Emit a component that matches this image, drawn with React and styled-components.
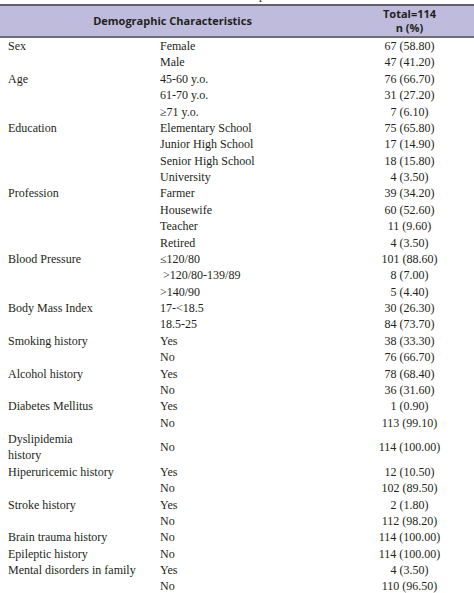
import React from "react";
import styled, { createGlobalStyle } from "styled-components";

const GlobalStyle = createGlobalStyle`
  html, body {
    margin: 0;
    padding: 0;
    background: #ffffff;
  }
`;

const Page = styled.div`
  width: 474px;
  height: 593px;
  overflow: hidden;
  background: #ffffff;
`;

const Caption = styled.div`
  height: 4px;
  overflow: hidden;
  display: flex;
  align-items: flex-end;
  justify-content: center;
  font-family: "Liberation Serif", serif;
  font-size: 12px;
  line-height: 12px;
  color: #231f20;
`;

const CaptionText = styled.span`
  display: block;
  transform: translateY(-3px);
`;

const Table = styled.table`
  width: 474px;
  border-collapse: collapse;
  table-layout: fixed;
  border-top: 2px solid #626168;
`;

const HeadRow = styled.tr`
  background: #bebbdc;
  border-bottom: 2px solid #6f6e74;
`;

const HeadCell = styled.th`
  height: 30px;
  padding: 0;
  font-family: "Open Sans", "Noto Sans", sans-serif;
  font-weight: 700;
  font-size: 11px;
  line-height: 14px;
  color: #231f20;
  text-align: center;
  vertical-align: middle;
`;

const Cell = styled.td`
  padding: 0 0 0 ${(p) => p.$pad || 0}px;
  font-family: "Liberation Serif", serif;
  font-size: 12px;
  line-height: 16.38px;
  color: #231f20;
  text-align: ${(p) => (p.$center ? "center" : "left")};
  vertical-align: middle;
  white-space: nowrap;
`;

const Row = styled.tr`
  height: ${(p) => (p.$tall ? "32.7px" : "auto")};
`;

const groups = [
  ["Sex", [["Female", "67 (58.80)"], ["Male", "47 (41.20)"]]],
  ["Age", [["45-60 y.o.", "76 (66.70)"], ["61-70 y.o.", "31 (27.20)"], ["\u226571 y.o.", "7 (6.10)"]]],
  ["Education", [["Elementary School", "75 (65.80)"], ["Junior High School", "17 (14.90)"], ["Senior High School", "18 (15.80)"], ["University", "4 (3.50)"]]],
  ["Profession", [["Farmer", "39 (34.20)"], ["Housewife", "60 (52.60)"], ["Teacher", "11 (9.60)"], ["Retired", "4 (3.50)"]]],
  ["Blood Pressure", [["\u2264120/80", "101 (88.60)"], ["\u00a0>120/80-139/89", "8 (7.00)"], [">140/90", "5 (4.40)"]]],
  ["Body Mass Index", [["17-<18.5", "30 (26.30)"], ["18.5-25", "84 (73.70)"]]],
  ["Smoking history", [["Yes", "38 (33.30)"], ["No", "76 (66.70)"]]],
  ["Alcohol history", [["Yes", "78 (68.40)"], ["No", "36 (31.60)"]]],
  ["Diabetes Mellitus", [["Yes", "1 (0.90)"], ["No", "113 (99.10)"]]],
  [["Dyslipidemia", "history"], [["No", "114 (100.00)"]]],
  ["Hiperuricemic history", [["Yes", "12 (10.50)"], ["No", "102 (89.50)"]]],
  ["Stroke history", [["Yes", "2 (1.80)"], ["No", "112 (98.20)"]]],
  ["Brain trauma history", [["No", "114 (100.00)"]]],
  ["Epileptic history", [["No", "114 (100.00)"]]],
  ["Mental disorders in family", [["Yes", "4 (3.50)"], ["No", "110 (96.50)"]]],
];

const App = () => {
  return (
    <Page>
      <GlobalStyle />
      <Caption>
        <CaptionText>Table 1: Samples</CaptionText>
      </Caption>
      <Table>
        <colgroup>
          <col style={{ width: 152 }} />
          <col style={{ width: 193 }} />
          <col style={{ width: 129 }} />
        </colgroup>
        <thead>
          <HeadRow>
            <HeadCell colSpan={2}>Demographic Characteristics</HeadCell>
            <HeadCell>
              Total=114
              <br />
              n (%)
            </HeadCell>
          </HeadRow>
        </thead>
        <tbody>
          {groups.map(([label, rows]) => {
            const tall = Array.isArray(label);
            const key = tall ? label.join(" ") : label;
            return rows.map(([sub, val], i) => (
              <Row key={key + sub} $tall={tall}>
                <Cell $pad={8}>
                  {i === 0 ? (tall ? <>{label[0]}<br />{label[1]}</> : label) : ""}
                </Cell>
                <Cell $pad={8}>{sub}</Cell>
                <Cell $center>{val}</Cell>
              </Row>
            ));
          })}
        </tbody>
      </Table>
    </Page>
  );
};

export default App;
